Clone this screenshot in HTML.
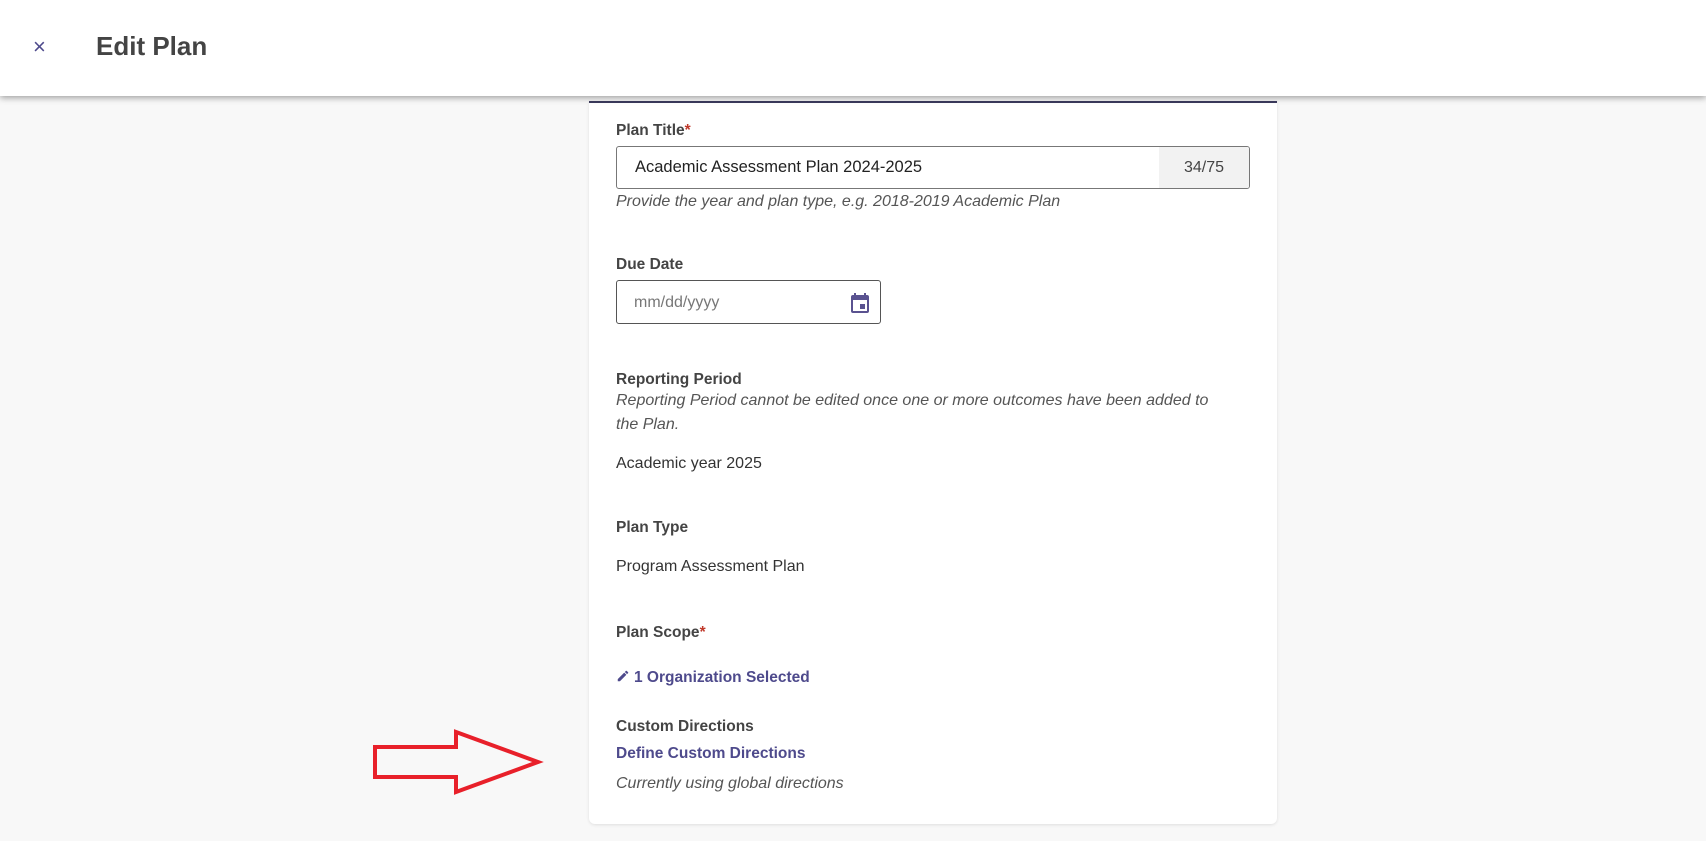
<!DOCTYPE html>
<html><head><meta charset="utf-8"><style>
*{margin:0;padding:0;box-sizing:border-box}
body{width:1706px;height:841px;overflow:hidden;background:#f8f8f8;font-family:"Liberation Sans",sans-serif;color:#333;position:relative}
.hdr{position:absolute;left:0;top:0;width:1706px;height:96px;background:#fff;box-shadow:0 2px 6px rgba(0,0,0,.35);z-index:2}
.x{position:absolute;left:33px;top:34px;font-size:22px;color:#4e4a8c}
.title{position:absolute;left:96px;top:31px;font-size:26px;font-weight:bold;color:#444}
.card{position:absolute;left:589px;top:101px;width:688px;height:723px;background:#fff;border-top:2px solid #3b3a5c;border-radius:0 0 6px 6px;box-shadow:0 1px 3px rgba(0,0,0,.1)}
.a{position:absolute;left:616px;font-size:16px;white-space:nowrap}
.lbl{font-weight:bold;color:#444;font-size:15.5px}
.it{font-style:italic;color:#555}
.star{color:#c0392b}
.lnk{color:#4e4a8c;font-weight:bold;font-size:15.5px}
.inp{position:absolute;left:616px;top:146px;width:634px;height:43px;border:1px solid #777;border-radius:3px;overflow:hidden}
.cnt{position:absolute;right:0;top:0;width:90px;height:100%;background:#f2f2f2;font-size:16px;color:#444;line-height:41px;text-align:center}
.date{position:absolute;left:616px;top:280px;width:265px;height:44px;border:1px solid #555;border-radius:3px}
</style></head><body>
<div class="hdr"><div class="x">×</div><div class="title">Edit Plan</div></div>
<div class="card"></div>
<div class="a lbl" style="top:122px">Plan Title<span class="star">*</span></div>
<div class="inp"><div style="position:absolute;left:18px;top:11px;font-size:16.5px;color:#222">Academic Assessment Plan 2024-2025</div><div class="cnt">34/75</div></div>
<div class="a it" style="top:193px">Provide the year and plan type, e.g. 2018-2019 Academic Plan</div>
<div class="a lbl" style="top:256px">Due Date</div>
<div class="date"><div style="position:absolute;left:17px;top:13px;font-size:16px;color:#777">mm/dd/yyyy</div>
<svg style="position:absolute;left:231px;top:10px" width="24" height="24" viewBox="0 0 24 24"><path fill="#5a5290" d="M19 4h-1V2h-2v2H8V2H6v2H5a2 2 0 0 0-2 2v14a2 2 0 0 0 2 2h14a2 2 0 0 0 2-2V6a2 2 0 0 0-2-2zm0 16H5V9h14v11zM12 13h5v5h-5z"/></svg></div>
<div class="a lbl" style="top:371px">Reporting Period</div>
<div class="a it" style="top:392px">Reporting Period cannot be edited once one or more outcomes have been added to</div>
<div class="a it" style="top:416px">the Plan.</div>
<div class="a" style="top:455px">Academic year 2025</div>
<div class="a lbl" style="top:519px">Plan Type</div>
<div class="a" style="top:558px">Program Assessment Plan</div>
<div class="a lbl" style="top:624px">Plan Scope<span class="star">*</span></div>
<div class="a lnk" style="top:669px"><svg width="14" height="14" viewBox="0 0 24 24" style="vertical-align:-1px;margin-right:4px"><path fill="#4e4a8c" d="M3 17.25V21h3.75L17.81 9.94l-3.75-3.75zM20.71 7.04a1 1 0 0 0 0-1.41l-2.34-2.34a1 1 0 0 0-1.41 0l-1.83 1.83 3.75 3.75z"/></svg>1 Organization Selected</div>
<div class="a lbl" style="top:718px">Custom Directions</div>
<div class="a lnk" style="top:745px">Define Custom Directions</div>
<div class="a it" style="top:775px">Currently using global directions</div>
<svg style="position:absolute;left:370px;top:727px" width="180" height="70"><path d="M5 20h81V5l82 30-82 30V50H5z" fill="none" stroke="#e8202a" stroke-width="4"/></svg>
</body></html>
